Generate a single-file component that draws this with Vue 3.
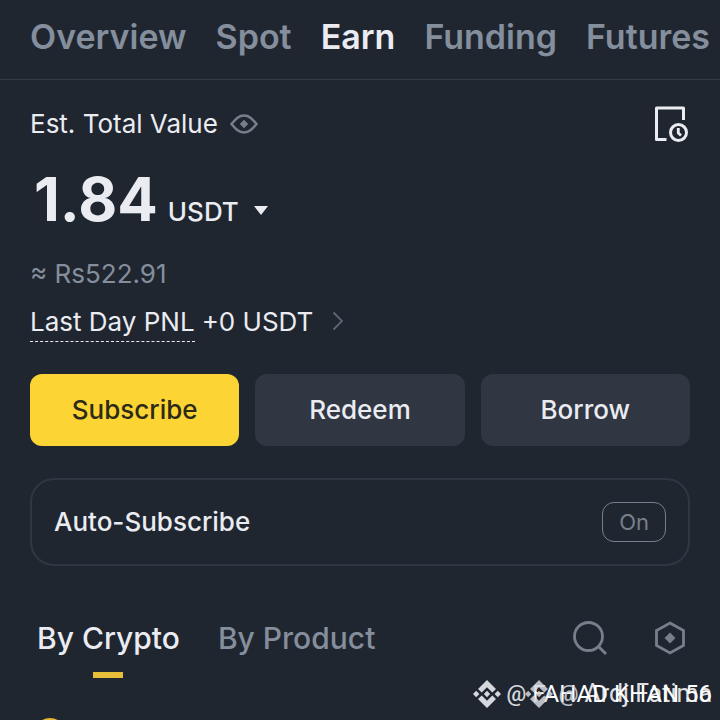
<script setup>
import { ref } from 'vue'

const sections = ['Overview', 'Spot', 'Earn', 'Funding', 'Futures']
const activeSection = ref('Earn')
const groupings = ['By Crypto', 'By Product']
const activeGrouping = ref('By Crypto')
const actions = ['Subscribe', 'Redeem', 'Borrow']
const credits = ['FAHAD KHAN 56', 'Ardj Fatima']
</script>

<template>
  <main class="wallet">
    <nav class="sections" aria-label="Wallet sections">
      <a
        v-for="name in sections"
        :key="name"
        href="#"
        class="section"
        :class="{ active: name === activeSection }"
        @click.prevent="activeSection = name"
      >{{ name }}</a>
    </nav>

    <div class="content">
      <header class="summary-head">
        <span class="label">Est. Total Value</span>
        <button class="icon-button eye" aria-label="Hide balance">
          <svg width="28" height="20" viewBox="0 0 28 20">
            <path d="M1.500 10C6 4.500 9 1.500 14 1.500S22 4.500 26.500 10C22 15.500 19 18.500 14 18.500S6 15.500 1.500 10Z" fill="none" stroke="currentColor" stroke-width="2.500" />
            <path d="M14 5.800 18.200 10 14 14.200 9.800 10Z" fill="currentColor" />
          </svg>
        </button>
        <button class="icon-button history" aria-label="History">
          <svg width="35" height="36" viewBox="0 0 35 36">
            <path d="M11.500 33.500H1.500V2H28.500V14" fill="none" stroke="currentColor" stroke-width="3" stroke-linejoin="round" />
            <circle cx="23.500" cy="26.500" r="8" fill="none" stroke="currentColor" stroke-width="3" />
            <path d="M23.300 22V27L26 29.500" fill="none" stroke="currentColor" stroke-width="2.800" />
          </svg>
        </button>
      </header>

      <div class="balance">
        <strong class="amount">1.84</strong>
        <button class="currency">
          USDT
          <svg width="16" height="14" viewBox="0 0 16 14"><path d="M1 1H15L8 10Z" fill="currentColor" /></svg>
        </button>
      </div>
      <p class="fiat">≈ Rs522.91</p>
      <a href="#" class="pnl" @click.prevent>
        <span class="pnl-label">Last Day PNL</span>
        <span>+0 USDT</span>
        <svg class="chevron" width="12" height="20" viewBox="0 0 12 20"><path d="M1.500 1.500 10 10 1.500 18.500" fill="none" stroke="currentColor" stroke-width="1.800" /></svg>
      </a>

      <div class="actions">
        <button v-for="(name, i) in actions" :key="name" class="action" :class="{ primary: i === 0 }">{{ name }}</button>
      </div>

      <section class="auto">
        <span>Auto-Subscribe</span>
        <button class="toggle" aria-label="Auto-Subscribe: On">On</button>
      </section>

      <div class="groupings">
        <button
          v-for="name in groupings"
          :key="name"
          class="grouping"
          :class="{ active: name === activeGrouping }"
          @click="activeGrouping = name"
        >{{ name }}</button>
        <div class="tools">
          <button class="icon-button" aria-label="Search">
            <svg width="36" height="36" viewBox="0 0 36 36">
              <circle cx="16.500" cy="16.500" r="14" fill="none" stroke="currentColor" stroke-width="2.800" />
              <path d="M26 26 34 34" stroke="currentColor" stroke-width="2.800" />
            </svg>
          </button>
          <button class="icon-button" aria-label="Settings">
            <svg width="32" height="34" viewBox="0 0 32 34">
              <path d="M16 2 29.500 9.500V24.500L16 32 2.500 24.500V9.500Z" fill="none" stroke="currentColor" stroke-width="2.800" />
              <path d="M16 11.500 21.500 17 16 22.500 10.500 17Z" fill="currentColor" />
            </svg>
          </button>
        </div>
      </div>
      <div class="coins"><span class="coin"></span></div>
    </div>

    <div v-for="(credit, i) in credits" :key="credit" class="credit" :class="{ under: i === 1 }">
      <svg width="28" height="28" viewBox="0 0 28 28" fill="currentColor">
        <path d="M14 0 23 9 19.300 12.500 14 7.200 8.700 12.500 5 9Z" />
        <path d="M14 28 23 19 19.300 15.500 14 20.800 8.700 15.500 5 19Z" />
        <path d="M14 10.800 17.200 14 14 17.200 10.800 14Z" />
        <path d="M3.200 10.800 6.400 14 3.200 17.200 0 14Z" />
        <path d="M24.800 10.800 28 14 24.800 17.200 21.600 14Z" />
      </svg>
      <span class="at">@</span>
      <span>{{ credit }}</span>
    </div>
  </main>
</template>

<style>
body {
  background: #202630;
}
</style>

<style scoped>
.wallet {
  position: relative;
  height: 100vh;
  overflow: hidden;
  background: #202630;
  color: #eaecf2;
  font-family: Inter, "Open Sans", sans-serif;
  font-size: 26px;
  line-height: 32px;
}
button {
  margin: 0;
  padding: 0;
  border: 0;
  background: none;
  color: inherit;
  font: inherit;
  cursor: pointer;
}
a {
  color: inherit;
  text-decoration: none;
}
svg {
  display: block;
}
.sections {
  display: flex;
  gap: 29px;
  padding: 16px 0 21px 30px;
  border-bottom: 1px solid #333b47;
  font-size: 34px;
  line-height: 42px;
  font-weight: 600;
  white-space: nowrap;
}
.section {
  color: #848e9c;
}
.section.active {
  color: #eaecf2;
}
.content {
  padding: 26px 30px 0;
}
.summary-head {
  display: flex;
  align-items: center;
  height: 36px;
}
.icon-button {
  color: #76808c;
}
.eye {
  margin-left: 12px;
}
.icon-button.history {
  margin-left: auto;
  color: #eaecf2;
}
.balance {
  display: flex;
  align-items: baseline;
  gap: 10px;
  padding: 21px 0 0 4px;
}
.amount {
  font-size: 60px;
  line-height: 72px;
}
.currency {
  display: flex;
  align-items: center;
  gap: 14px;
  font-weight: 500;
}
.fiat {
  margin: 23px 0 16px;
  color: #848e9c;
}
.pnl {
  display: flex;
  align-items: flex-start;
  gap: 7px;
}
.pnl-label {
  padding-bottom: 3px;
  border-bottom: 1px dashed #eaecf2;
}
.chevron {
  margin: 5px 0 0 12px;
  color: #5e6673;
}
.actions {
  display: grid;
  grid-template-columns: repeat(3, 1fr);
  gap: 16px;
  margin-top: 32px;
}
.action {
  height: 72px;
  border-radius: 12px;
  background: #313742;
  font-weight: 500;
}
.action.primary {
  background: #fcd535;
  color: #2d2a18;
}
.auto {
  display: flex;
  align-items: center;
  justify-content: space-between;
  margin-top: 32px;
  padding: 22px;
  border: 2px solid #313742;
  border-radius: 24px;
  font-weight: 500;
}
.toggle {
  padding: 3px 16px;
  border: 1px solid #76808c;
  border-radius: 12px;
  color: #76808c;
  font-size: 22px;
  font-weight: 400;
}
.groupings {
  display: flex;
  align-items: center;
  gap: 38px;
  padding: 46px 0 0 7px;
  font-size: 30px;
  line-height: 52px;
  font-weight: 500;
}
.grouping {
  position: relative;
  color: #848e9c;
}
.grouping.active {
  color: #eaecf2;
}
.grouping.active::after {
  content: "";
  position: absolute;
  bottom: -14px;
  left: 50%;
  width: 30px;
  height: 6px;
  margin-left: -15px;
  background: #e8bd3a;
}
.tools {
  display: flex;
  align-items: center;
  gap: 46px;
  margin-left: auto;
  padding-right: 4px;
}
.coins {
  padding: 54px 0 0 4px;
}
.coin {
  display: block;
  width: 32px;
  height: 32px;
  border-radius: 50%;
  background: #e8b62f;
}
.credit {
  position: absolute;
  right: 8px;
  bottom: 10px;
  display: flex;
  align-items: center;
  gap: 6px;
  font-family: Roboto, sans-serif;
  font-size: 24px;
  color: #ffffff;
  white-space: nowrap;
}
.credit svg,
.at {
  color: #d5d8dd;
}
.at {
  font-size: 22px;
  font-weight: 500;
}
.credit.under {
  font-size: 25px;
  opacity: 0.85;
}
</style>
